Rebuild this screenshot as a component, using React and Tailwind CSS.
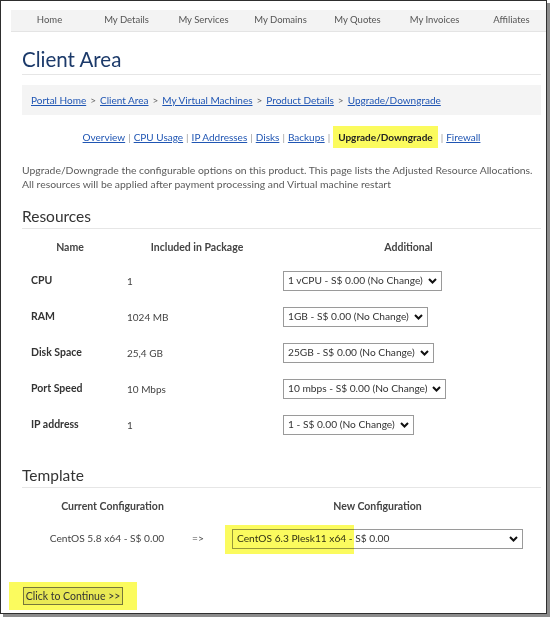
import React from 'react'

const navItems = ['Home', 'My Details', 'My Services', 'My Domains', 'My Quotes', 'My Invoices', 'Affiliates']

const crumbs = ['Portal Home', 'Client Area', 'My Virtual Machines', 'Product Details', 'Upgrade/Downgrade']

const tabs = ['Overview', 'CPU Usage', 'IP Addresses', 'Disks', 'Backups', 'Upgrade/Downgrade', 'Firewall']

const resources = [
  { name: 'CPU', included: '1', option: '1 vCPU - S$ 0.00 (No Change)' },
  { name: 'RAM', included: '1024 MB', option: '1GB - S$ 0.00 (No Change)' },
  { name: 'Disk Space', included: '25,4 GB', option: '25GB - S$ 0.00 (No Change)' },
  { name: 'Port Speed', included: '10 Mbps', option: '10 mbps - S$ 0.00 (No Change)' },
  { name: 'IP address', included: '1', option: '1 - S$ 0.00 (No Change)' }
]

const Chevron = () => (
  <svg width="9" height="6" viewBox="0 0 9 6" className="shrink-0">
    <path d="M1 1 L4.5 4.5 L8 1" fill="none" stroke="#111" strokeWidth="2" />
  </svg>
)

const FakeSelect = ({ children, className = '' }) => (
  <div className={`flex h-[20px] items-center gap-[5px] border border-[#9a9a9a] bg-white pl-[4px] pr-[4px] text-[10.2px] text-[#333] ${className}`}>
    <span className="whitespace-nowrap">{children}</span>
    <Chevron />
  </div>
)

const App = () => {
  return (
    <div className="h-[617px] w-[550px] bg-white" style={{ fontFamily: 'Lato, "Liberation Sans", sans-serif' }}>
      <div className="relative h-[614px] w-[547px] overflow-hidden border border-[#2e2e2e] bg-white pl-[10px] pt-[9px] shadow-[3px_3px_0_0_#8c8c8c]">
        {/* Top nav */}
        <div className="flex h-[22px] w-[539px] border-b border-[#e4e4e4] bg-[#f3f3f3]">
          {navItems.map((item) => (
            <div key={item} className="flex w-[77px] shrink-0 items-center justify-center text-[9.5px] text-[#555]">
              {item}
            </div>
          ))}
        </div>

        <div className="pl-[11px] pr-[5px]">
          {/* Title */}
          <h1 className="mt-[11px] h-[32px] border-b border-[#e6e6e6] text-[20.5px] leading-[32px] text-[#1c3a6a]">
            Client Area
          </h1>

          {/* Breadcrumb */}
          <div className="mt-[10px] flex h-[30px] items-center bg-[#f4f4f4] pl-[9px] text-[10px] text-[#666]">
            {crumbs.map((c, i) => (
              <span key={c}>
                <span className="text-[#1f55b3] underline">{c}</span>
                {i < crumbs.length - 1 && <span className="px-[4px]">&gt;</span>}
              </span>
            ))}
          </div>

          {/* Tabs */}
          <div className="mt-[11px] flex h-[22px] items-center justify-center text-[10px] text-[#999]">
            {tabs.map((t, i) => (
              <span key={t} className="flex h-full items-center">
                {t === 'Upgrade/Downgrade' ? (
                  <span className="flex h-full items-center bg-[#fbfb5e] px-[5px] font-bold text-[#222]">{t}</span>
                ) : (
                  <span className="text-[#1f55b3] underline">{t}</span>
                )}
                {i < tabs.length - 1 && <span className="px-[3px]">|</span>}
              </span>
            ))}
          </div>

          {/* Description */}
          <p className="mt-[15px] text-[10.4px] leading-[14px] text-[#5a5a5a]">
            Upgrade/Downgrade the configurable options on this product. This page lists the Adjusted Resource Allocations.
            <br />
            All resources will be applied after payment processing and Virtual machine restart
          </p>

          {/* Resources */}
          <h2 className="mt-[13px] h-[25px] border-b border-[#e6e6e6] text-[15.5px] leading-[24px] text-[#333]">Resources</h2>

          <div className="mt-[9px] flex h-[20px] items-center text-[10.5px] font-bold text-[#444]">
            <div className="w-[96px] text-center">Name</div>
            <div className="w-[158px] text-center">Included in Package</div>
            <div className="flex-1 text-center">Additional</div>
          </div>

          <div className="mt-[5px]">
            {resources.map((r) => (
              <div key={r.name} className="flex h-[36px] items-center text-[10px] text-[#444]">
                <div className="w-[96px] pl-[9px] text-[10.5px] font-bold text-[#333]">{r.name}</div>
                <div className="w-[158px] pl-[9px]">{r.included}</div>
                <div className="flex-1 pl-[7px]">
                  <FakeSelect className="w-fit">{r.option}</FakeSelect>
                </div>
              </div>
            ))}
          </div>

          {/* Template */}
          <h2 className="mt-[20px] h-[25px] border-b border-[#e6e6e6] text-[15.5px] leading-[24px] text-[#333]">Template</h2>

          <div className="mt-[9px] flex h-[20px] items-center text-[10.5px] font-bold text-[#444]">
            <div className="w-[181px] text-center">Current Configuration</div>
            <div className="ml-[29px] w-[291px] text-center">New Configuration</div>
          </div>

          <div className="relative mt-[12px] flex h-[20px] items-center text-[10.2px] text-[#444]">
            <div className="w-[170px] text-center">CentOS 5.8 x64 - S$ 0.00</div>
            <div className="w-[40px]">=&gt;</div>
            <div className="flex h-[20px] w-[291px] items-center justify-between border border-[#9a9a9a] bg-white pl-[4px] pr-[4px] text-[#333]">
              <span>CentOS 6.3 Plesk11 x64 - S$ 0.00</span>
              <Chevron />
            </div>
            <div className="pointer-events-none absolute left-[203px] top-[-4px] h-[29px] w-[129px] bg-[#fbfb5e] mix-blend-multiply" />
          </div>

          {/* Continue */}
          <div className="ml-[-13px] mt-[33px] inline-flex bg-[#fbfb5e] px-[14px] py-[5px]">
            <button className="h-[18px] w-[100px] border border-[#77773a] bg-[#e9e955] text-[10.5px] leading-none text-[#333]">
              Click to Continue &gt;&gt;
            </button>
          </div>
        </div>
      </div>
    </div>
  )
}

export default App
